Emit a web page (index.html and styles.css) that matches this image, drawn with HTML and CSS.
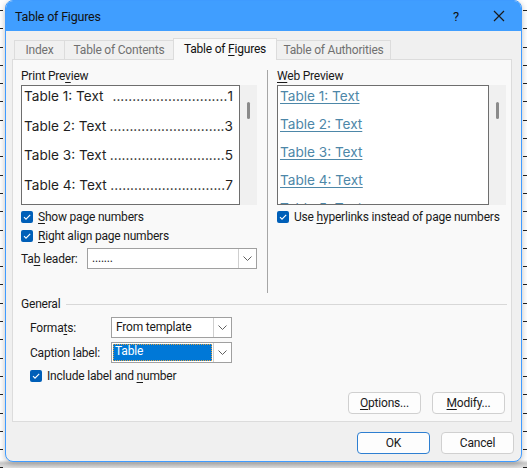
FILE: index.html
```html
<!DOCTYPE html>
<html>
<head>
<meta charset="utf-8">
<link rel="stylesheet" href="styles.css">
</head>
<body>
<div class="window">
  <div class="titlebar">
    <span class="title">Table of Figures</span>
    <span class="help">?</span>
    <span class="close"><svg width="12" height="12" viewBox="0 0 12 12"><path d="M1 1L11 11M11 1L1 11" stroke="#1a1a1a" stroke-width="1.2" fill="none"/></svg></span>
  </div>
  <div class="content">
    <div class="tabs">
      <div class="tab t1">Index</div>
      <div class="tab t2">Table of Contents</div>
      <div class="tab active t3">Table of <u>F</u>igures</div>
      <div class="tab t4">Table of Authorities</div>
    </div>
    <div class="panel">
      <div class="cols">
        <div class="col left">
          <div class="label">Print Pre<u>v</u>iew</div>
          <div class="previewwrap">
            <div class="preview">
              <div class="prow"><span>Table 1: Text</span><span class="leader">.............................</span><span class="num">1</span></div>
              <div class="prow"><span>Table 2: Text</span><span class="leader">.............................</span><span class="num">3</span></div>
              <div class="prow"><span>Table 3: Text</span><span class="leader">.............................</span><span class="num">5</span></div>
              <div class="prow"><span>Table 4: Text</span><span class="leader">.............................</span><span class="num">7</span></div>
            </div>
            <div class="scroll"><div class="thumb"></div></div>
          </div>
          <div class="check first"><span class="box"><svg width="12" height="12" viewBox="0 0 12 12"><path d="M3 6.2L5 8.2L9.2 3.8" stroke="#fff" stroke-width="1.1" fill="none"/></svg></span><span><u>S</u>how page numbers</span></div>
          <div class="check"><span class="box"><svg width="12" height="12" viewBox="0 0 12 12"><path d="M3 6.2L5 8.2L9.2 3.8" stroke="#fff" stroke-width="1.1" fill="none"/></svg></span><span><u>R</u>ight align page numbers</span></div>
          <div class="field leaderrow">
            <span class="flabel">Ta<u>b</u> leader:</span>
            <div class="combo wide"><span class="cval">.......</span><span class="chev"><svg width="9" height="5" viewBox="0 0 9 5"><path d="M0.5 0.5L4.5 4.5L8.5 0.5" stroke="#606060" stroke-width="1" fill="none"/></svg></span></div>
          </div>
        </div>
        <div class="sep"></div>
        <div class="col right">
          <div class="label"><u>W</u>eb Preview</div>
          <div class="previewwrap">
            <div class="preview web">
              <div class="wrow">Table 1: Text</div>
              <div class="wrow">Table 2: Text</div>
              <div class="wrow">Table 3: Text</div>
              <div class="wrow">Table 4: Text</div>
              <div class="wrow last">Table 5: Text</div>
            </div>
            <div class="scroll"><div class="thumb"></div></div>
          </div>
          <div class="check first"><span class="box"><svg width="12" height="12" viewBox="0 0 12 12"><path d="M3 6.2L5 8.2L9.2 3.8" stroke="#fff" stroke-width="1.1" fill="none"/></svg></span><span class="nowrap">Use <u>h</u>yperlinks instead of page numbers</span></div>
        </div>
      </div>
      <div class="general">
        <span>General</span><span class="gline"></span>
      </div>
      <div class="gbody">
        <div class="field">
          <span class="flabel g">Forma<u>t</u>s:</span>
          <div class="combo narrow"><span class="cval">From template</span><span class="chev"><svg width="9" height="5" viewBox="0 0 9 5"><path d="M0.5 0.5L4.5 4.5L8.5 0.5" stroke="#606060" stroke-width="1" fill="none"/></svg></span></div>
        </div>
        <div class="field second">
          <span class="flabel g">Caption <u>l</u>abel:</span>
          <div class="combo narrow"><span class="cval sel">Table</span><span class="chev"><svg width="9" height="5" viewBox="0 0 9 5"><path d="M0.5 0.5L4.5 4.5L8.5 0.5" stroke="#606060" stroke-width="1" fill="none"/></svg></span></div>
        </div>
        <div class="check inc"><span class="box"><svg width="12" height="12" viewBox="0 0 12 12"><path d="M3 6.2L5 8.2L9.2 3.8" stroke="#fff" stroke-width="1.1" fill="none"/></svg></span><span>Include label and <u>n</u>umber</span></div>
      </div>
      <div class="pbuttons">
        <button class="btn"><u>O</u>ptions...</button>
        <button class="btn"><u>M</u>odify...</button>
      </div>
    </div>
    <div class="dbuttons">
      <button class="btn ok">OK</button>
      <button class="btn">Cancel</button>
    </div>
  </div>
</div>
</body>
</html>
```
FILE: styles.css
```css
html, body { margin: 0; padding: 0; }
body {
  width: 527px;
  height: 468px;
  overflow: hidden;
  background-color: #ffffff;
  background-image:
    repeating-linear-gradient(to bottom, transparent 0, transparent 10px, #222 10px, #222 11px, transparent 11px, transparent 18.3px),
    repeating-linear-gradient(to bottom, transparent 0, transparent 10px, #222 10px, #222 11px, transparent 11px, transparent 18.3px),
    linear-gradient(to bottom, #ffffff 0, #ffffff 460px, #c8c8c8 463px, #e2e2e2 468px);
  background-size: 3px 468px, 4px 468px, 100% 100%;
  background-position: 0 0, 523px 0, 0 0;
  background-repeat: no-repeat;
  font-family: "Roboto", "Noto Sans", sans-serif;
  font-size: 12px;
  letter-spacing: -0.2px;
  color: #1a1a1a;
}
u { text-decoration: underline; text-underline-offset: 2px; }
.nowrap { white-space: nowrap; }

.window {
  margin-left: 5px;
  width: 517px;
  height: 462px;
  box-sizing: border-box;
  border: 1px solid #3f9bff;
  border-radius: 8px;
  background: #f0f0f0;
  overflow: hidden;
  display: flex;
  flex-direction: column;
  box-shadow: 0 2px 6px rgba(0,0,0,0.25);
}
.titlebar {
  height: 30px;
  flex: none;
  background: #409eff;
  display: flex;
  align-items: center;
  padding-left: 9px;
  color: #111;
}
.title { flex: 1; font-size: 12.5px; }
.help { width: 14px; text-align: center; margin-right: 30px; font-size: 13px; }
.close { width: 12px; height: 12px; margin-right: 16px; display: flex; }

.content { padding: 7px 0 0 6px; }
.tabs { display: flex; align-items: flex-end; height: 21px; margin-left: 2px; position: relative; z-index: 1; }
.tab {
  height: 19px;
  box-sizing: border-box;
  border: 1px solid #dcdcdc;
  border-bottom: none;
  margin-right: -1px;
  background: #f0f0f0;
  color: #707070;
  text-align: center;
  line-height: 19px;
  font-size: 12px;
}
.t1 { width: 51px; }
.t2 { width: 110px; }
.t3 { width: 104px; }
.t4 { width: 115px; }
.tab.active {
  height: 22px;
  margin-bottom: -1px;
  background: #f9f9f9;
  color: #111;
  line-height: 20px;
}
.panel {
  width: 500px;
  height: 363px;
  box-sizing: border-box;
  border: 1px solid #dcdcdc;
  background: #f9f9f9;
  padding-left: 8px;
}
.cols { display: flex; height: 236px; }
.col.left { width: 236px; }
.col.right { width: 229px; margin-left: 9px; }
.sep { width: 1px; margin-left: 10px; margin-top: 10px; height: 223px; background: #a6a6a6; }
.label { height: 16px; line-height: 16px; margin-top: 8px; margin-bottom: 1px; }
.previewwrap { display: flex; height: 120px; }
.preview {
  flex: 1;
  box-sizing: border-box;
  border: 1px solid #6e6e6e;
  background: #fff;
  overflow: hidden;
  padding: 1px 6px 0 2px;
  font-family: "Inter", "Roboto", sans-serif;
  font-size: 13.6px;
  letter-spacing: 0;
  color: #1f1f1f;
}
.prow { display: flex; height: 29.7px; line-height: 18px; white-space: nowrap; }
.leader { flex: 1; text-align: right; letter-spacing: 0.05px; padding-left: 2px; }
.num { flex: none; }
.web { padding-left: 2px; }
.wrow { height: 28px; line-height: 18px; color: #4d87a8; text-decoration: underline; text-underline-offset: 2px; white-space: nowrap; }
.wrow.last { height: 6px; overflow: hidden; }
.scroll { width: 17px; background: #f0f0f0; }
.thumb { width: 3px; height: 17px; background: #8a8a8a; border-radius: 2px; margin: 17px 0 0 7px; }

.check { display: flex; align-items: center; height: 13px; margin-top: 6px; }
.check.first { margin-top: 5px; }
.box {
  width: 12px; height: 12px;
  background: #005fb8;
  border-radius: 2px;
  margin-right: 5px;
  display: flex;
  flex: none;
}
.field { display: flex; align-items: center; height: 21px; }
.leaderrow { margin-top: 6px; }
.flabel { width: 66px; }
.flabel.g { width: 81px; }
.combo {
  display: flex;
  height: 21px;
  box-sizing: border-box;
  border: 1px solid #a0a0a0;
  background: #fff;
}
.combo.wide { width: 170px; }
.combo.narrow { width: 121px; }
.cval { flex: 1; padding-left: 4px; line-height: 19px; }
.cval.sel {
  margin: 1px;
  padding-left: 2px;
  background: #0078d7;
  color: #fff;
  line-height: 15px;
  outline: 1px dotted #e0a040;
  outline-offset: -1px;
}
.chev {
  width: 17px;
  border-left: 1px solid #cfcfcf;
  display: flex;
  align-items: center;
  justify-content: center;
}

.general { display: flex; align-items: center; height: 14px; margin-top: 1px; }
.gline { flex: 1; height: 1px; background: #d8d8d8; margin-left: 6px; margin-right: 4px; }
.gbody { padding-left: 9px; margin-top: 6px; }
.field.second { margin-top: 4px; }
.check.inc { margin-top: 6px; }

.pbuttons { display: flex; justify-content: flex-end; gap: 11px; margin-top: 10px; padding-right: 6px; }
.btn {
  width: 73px;
  height: 22px;
  box-sizing: border-box;
  border: 1px solid #d0d0d0;
  border-radius: 4px;
  background: #fdfdfd;
  font-family: "Roboto", "Noto Sans", sans-serif;
  font-size: 12px;
  letter-spacing: -0.2px;
  color: #1a1a1a;
  padding: 0;
  line-height: 18px;
}
.dbuttons { display: flex; justify-content: flex-end; gap: 11px; margin-top: 10px; padding-right: 7px; }
.btn.ok { border-color: #2e7fd1; }
```
